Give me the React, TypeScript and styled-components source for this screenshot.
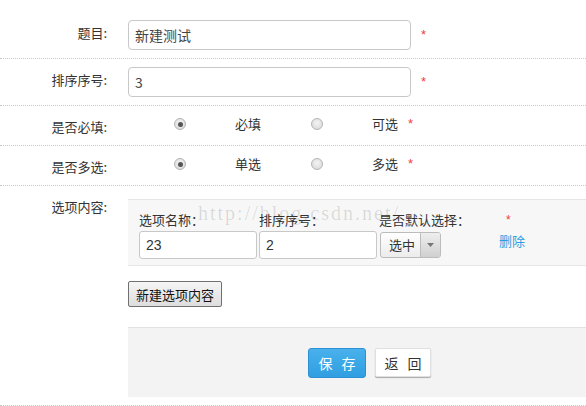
import React from 'react';
import styled, { createGlobalStyle } from 'styled-components';

const GlobalStyle = createGlobalStyle`
  html, body {
    margin: 0;
    padding: 0;
    background: #ffffff;
  }
  body {
    font-family: "Noto Sans CJK SC", "Liberation Sans", sans-serif;
    font-size: 13px;
    color: #333333;
  }
`;

type RadioOption = { label: string; checked: boolean };

type OptionItem = { name: string; order: string; selected: string };

const options: OptionItem[] = [{ name: '23', order: '2', selected: '选中' }];

const RadioRow = ({ items }: { items: RadioOption[] }) => (
  <RadioGroup>
    {items.map((item) => (
      <RadioItem key={item.label}>
        <RadioDot $checked={item.checked} />
        <RadioText>{item.label}</RadioText>
      </RadioItem>
    ))}
    <Star>*</Star>
  </RadioGroup>
);

const App = () => {
  return (
    <>
      <GlobalStyle />
      <Form>
        <Row>
          <Label>题目:</Label>
          <Field $pad='8px 0'>
            <TextInput>新建测试</TextInput>
            <Star>*</Star>
          </Field>
        </Row>
        <Row>
          <Label>排序序号:</Label>
          <Field $pad='8px 0'>
            <TextInput>3</TextInput>
            <Star>*</Star>
          </Field>
        </Row>
        <Row>
          <Label>是否必填:</Label>
          <Field $pad='10px 0 13px'>
            <RadioRow
              items={[
                { label: '必填', checked: true },
                { label: '可选', checked: false },
              ]}
            />
          </Field>
        </Row>
        <Row>
          <Label>是否多选:</Label>
          <Field $pad='10px 0 13px'>
            <RadioRow
              items={[
                { label: '单选', checked: true },
                { label: '多选', checked: false },
              ]}
            />
          </Field>
        </Row>
        <Row>
          <Label>选项内容:</Label>
          <Field $pad='13px 0 8px' $column>
            <OptionBox>
              <OptionGrid>
                <SmallLabel>选项名称：</SmallLabel>
                <SmallLabel>排序序号：</SmallLabel>
                <SmallLabel>是否默认选择：</SmallLabel>
                <SmallStar>*</SmallStar>
                {options.map((opt) => (
                  <React.Fragment key={opt.name}>
                    <CellInput>{opt.name}</CellInput>
                    <CellInput>{opt.order}</CellInput>
                    <Select>
                      <SelectText>{opt.selected}</SelectText>
                      <SelectArrow>
                        <svg width='7' height='4' viewBox='0 0 7 4'>
                          <path d='M0 0 L7 0 L3.5 4 Z' fill='#777' />
                        </svg>
                      </SelectArrow>
                    </Select>
                    <DeleteLink>删除</DeleteLink>
                  </React.Fragment>
                ))}
              </OptionGrid>
            </OptionBox>
            <AddButton>新建选项内容</AddButton>
            <ActionBar>
              <PrimaryButton>保 存</PrimaryButton>
              <SecondaryButton>返 回</SecondaryButton>
            </ActionBar>
          </Field>
        </Row>
        <Watermark>http://blog.csdn.net/</Watermark>
      </Form>
    </>
  );
};

const Form = styled.div`
  position: relative;
  width: 586px;
  padding-top: 12px;
  overflow: hidden;
`;

const Row = styled.div`
  display: flex;
  align-items: flex-start;
  border-bottom: 1px dotted #c8c8c8;
`;

const Label = styled.div`
  width: 107px;
  flex-shrink: 0;
  margin-right: 21px;
  padding-top: 13px;
  line-height: 16px;
  text-align: right;
  font-size: 13px;
  color: #333333;
`;

const Field = styled.div<{ $pad: string; $column?: boolean }>`
  flex: 1;
  display: flex;
  flex-direction: ${(p) => (p.$column ? 'column' : 'row')};
  align-items: ${(p) => (p.$column ? 'flex-start' : 'center')};
  padding: ${(p) => p.$pad};
`;

const TextInput = styled.div`
  box-sizing: border-box;
  width: 283px;
  height: 30px;
  padding: 0 6px;
  border: 1px solid #c8c8c8;
  border-radius: 4px;
  font-size: 14px;
  line-height: 28px;
  color: #444444;
  background: #ffffff;
`;

const Star = styled.span`
  margin-left: 10px;
  color: #f03c3c;
  font-family: "Liberation Sans", sans-serif;
  font-size: 13px;
  line-height: 13px;
  position: relative;
  top: -1px;
`;

const RadioGroup = styled.div`
  display: flex;
  align-items: center;
  padding-left: 46px;
  height: 16px;
`;

const RadioItem = styled.div`
  display: flex;
  align-items: center;
  margin-right: 50px;

  &:last-of-type {
    margin-right: 0;
  }
`;

const RadioDot = styled.span<{ $checked: boolean }>`
  box-sizing: border-box;
  width: 12px;
  height: 12px;
  border-radius: 50%;
  border: 1px solid #b4b4b4;
  background: radial-gradient(circle at 50% 40%, #f4f4f4 0%, #d6d6d6 100%);
  margin-right: 49px;
  position: relative;

  &::after {
    content: '';
    display: ${(p) => (p.$checked ? 'block' : 'none')};
    position: absolute;
    left: 2.5px;
    top: 2.5px;
    width: 5px;
    height: 5px;
    border-radius: 50%;
    background: #555555;
  }
`;

const RadioText = styled.span`
  font-size: 13px;
  line-height: 16px;
  color: #333333;
`;

const OptionBox = styled.div`
  box-sizing: border-box;
  width: 100%;
  padding: 11px 11px 6px;
  background: #f7f7f7;
  border-top: 1px solid #e6e6e6;
  border-bottom: 1px solid #e6e6e6;
`;

const OptionGrid = styled.div`
  display: grid;
  grid-template-columns: 120px 120px 120px 120px;
  row-gap: 3px;
  align-items: center;
`;

const SmallLabel = styled.div`
  font-size: 13px;
  line-height: 17px;
  color: #333333;
`;

const SmallStar = styled.div`
  padding-left: 7px;
  color: #f03c3c;
  font-family: "Liberation Sans", sans-serif;
  font-size: 12px;
  line-height: 14px;
`;

const CellInput = styled.div`
  box-sizing: border-box;
  width: 118px;
  height: 28px;
  padding: 0 6px;
  border: 1px solid #c8c8c8;
  border-radius: 3px;
  background: #ffffff;
  font-family: "Liberation Sans", sans-serif;
  font-size: 14px;
  line-height: 26px;
  color: #333333;
`;

const Select = styled.div`
  box-sizing: border-box;
  display: flex;
  width: 61px;
  height: 26px;
  margin-left: 1px;
  border: 1px solid #bcbcbc;
  border-radius: 3px;
  overflow: hidden;
  background: linear-gradient(#ffffff, #ececec);
`;

const SelectText = styled.span`
  flex: 1;
  padding-left: 8px;
  font-size: 13px;
  line-height: 24px;
  color: #333333;
`;

const SelectArrow = styled.span`
  width: 19px;
  display: flex;
  align-items: center;
  justify-content: center;
  border-left: 1px solid #bcbcbc;
  background: linear-gradient(#eeeeee, #d0d0d0);
`;

const DeleteLink = styled.a`
  font-size: 13px;
  line-height: 16px;
  color: #2a9fe0;
  cursor: pointer;
  margin-top: -8px;
`;

const AddButton = styled.button`
  box-sizing: border-box;
  margin-top: 15px;
  height: 26px;
  padding: 0 7px;
  border: 1px solid #707070;
  border-radius: 2px;
  background: linear-gradient(#f6f6f6, #dddddd);
  font-family: "Noto Sans CJK SC", "Liberation Sans", sans-serif;
  font-size: 13px;
  color: #111111;
`;

const ActionBar = styled.div`
  box-sizing: border-box;
  width: 100%;
  height: 70px;
  margin-top: 20px;
  padding-left: 180px;
  display: flex;
  align-items: center;
  gap: 9px;
  background: #f3f3f3;
  border-top: 1px solid #e2e2e2;
`;

const PrimaryButton = styled.button`
  box-sizing: border-box;
  width: 58px;
  height: 30px;
  border: 1px solid #2b90d4;
  border-radius: 3px;
  background: linear-gradient(#49b1ec, #2f9ee1);
  color: #ffffff;
  font-family: "Noto Sans CJK SC", "Liberation Sans", sans-serif;
  font-size: 14px;
  letter-spacing: 3px;
  padding: 0 0 0 3px;
`;

const SecondaryButton = styled.button`
  box-sizing: border-box;
  width: 56px;
  height: 29px;
  border: 1px solid #e0e0e0;
  border-radius: 2px;
  background: #ffffff;
  box-shadow: 0 1px 1px #a8a8a8;
  color: #333333;
  font-family: "Noto Sans CJK SC", "Liberation Sans", sans-serif;
  font-size: 14px;
  letter-spacing: 3px;
  padding: 0 0 0 3px;
`;

const Watermark = styled.div`
  position: absolute;
  left: 198px;
  top: 202px;
  font-family: "Liberation Serif", serif;
  font-size: 20px;
  letter-spacing: 2px;
  color: rgba(0, 0, 0, 0.13);
  pointer-events: none;
  white-space: nowrap;
`;

export default App;
